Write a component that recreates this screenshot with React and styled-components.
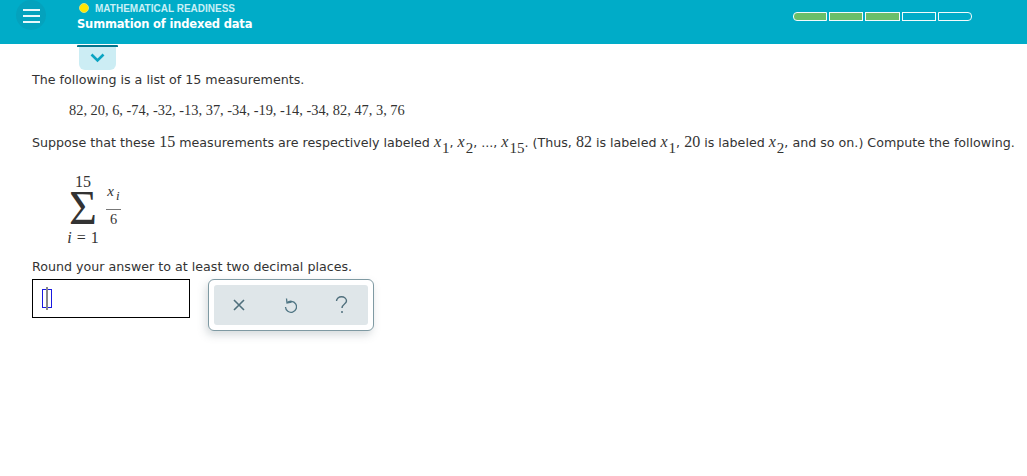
import React from 'react';
import styled, { createGlobalStyle } from 'styled-components';

const Global = createGlobalStyle`
  html, body { margin: 0; padding: 0; background: #fff; }
  #root { width: 1027px; height: 476px; overflow: hidden; }
`;
const Page = styled.div`
  width: 1027px; height: 476px; background: #fff; color: #333;
  font-family: "DejaVu Sans", Verdana, sans-serif; font-size: 12.67px;
`;
const Header = styled.header`
  height: 44px; background: #00acc8; display: flex; align-items: flex-start;
`;
const MenuButton = styled.div`
  width: 30px; height: 30px; margin: 0 0 0 16px; border-radius: 50%; box-sizing: border-box;
  background: #04a2bd; display: flex; flex-direction: column; gap: 4px;
  align-items: center; justify-content: center; padding-top: 2px;
`;
const MenuBar = styled.span`
  display: block; width: 17px; height: 2px; background: #e8f8fb;
`;
const Titles = styled.div`
  margin-left: 31px; display: flex; flex-direction: column; padding-top: 1px;
`;
const Topic = styled.div`
  display: flex; align-items: center; gap: 6px; height: 14px; margin-left: 2px;
  color: #c9f0f6; font-family: "Liberation Sans", sans-serif; font-size: 10px; font-weight: 700;
`;
const Dot = styled.span`
  width: 10px; height: 10px; border-radius: 50%; background: #ffe600; box-sizing: border-box; border: 0.5px solid #d8e27a;
`;
const Title = styled.div`
  margin-top: 2px; color: #fff; font-family: "DejaVu Sans", sans-serif; font-size: 11.5px; font-weight: 700; letter-spacing: -0.17px;
`;
const Progress = styled.div`
  display: flex; gap: 2px; margin: 12px 55px 0 auto;
`;
const Segment = styled.span`
  width: ${p => p.$w}px; height: 7px; border: 1px solid #f2fbfc;
  background: ${p => (p.$done ? '#6abf69' : 'transparent')};
  border-radius: ${p => p.$round || '0'};
`;
const Drawer = styled.div`
  position: relative; width: 37px; height: 25px; margin: 1px 0 0 79px; background: #ccedf4;
  border-radius: 0 0 6px 6px;
  display: flex; align-items: center; justify-content: center; padding-top: 1px; box-sizing: border-box;
  &::before { content: ''; position: absolute; top: 0; left: -2px; right: -2px; height: 2px; background: #04768c; border-radius: 1px 1px 0 0; }
`;
const Content = styled.main`
  padding: 2px 0 0 32px;
`;
const Para = styled.p`
  margin: 0; line-height: 16px; white-space: nowrap;
`;
const Data = styled.p`
  margin: 14px 0 0 37px; line-height: 16px;
  font-family: "Liberation Serif", serif; font-size: 14.4px; color: #333;
`;
const Suppose = styled(Para)`
  margin-top: 16px; height: 20px;
`;
const Num = styled.span`
  font-family: "Liberation Serif", serif; font-size: 16px;
`;
const V = styled.i`
  font-family: "Liberation Serif", serif; font-size: 16px; letter-spacing: 1px;
`;
const Sub = styled.sub`
  font-family: "Liberation Serif", serif; font-size: 15px; line-height: 0; vertical-align: -6px;
`;
const Formula = styled.div`
  margin: 20px 0 0 31px; width: 90px; height: 71px; display: flex; font-family: "Liberation Serif", serif; color: #333;
`;
const SumCol = styled.div`
  width: 40px; display: flex; flex-direction: column; align-items: center; font-size: 16px; line-height: 15px;
`;
const Sigma = styled.span`
  font-size: 48px; line-height: 38px; height: 41px;
`;
const Limit = styled.span`
  word-spacing: 1px;
`;
const Fraction = styled.div`
  margin: 9px 0 0 3px; display: flex; flex-direction: column; align-items: center; width: 15px;
  font-size: 14.4px; line-height: 15px;
`;
const Numer = styled.span`
  font-style: italic; border-bottom: 1px solid #777; width: 100%; text-align: center; padding-bottom: 9px; line-height: 16px; white-space: nowrap; font-size: 15px;
`;
const IdxI = styled.span`
  font-size: 13px; position: relative; top: 4px; margin-left: 2px;
`;
const Six = styled.span`
  padding-top: 2px;
`;
const Round = styled(Para)`
  margin-top: 14px;
`;
const AnswerRow = styled.div`
  display: flex; align-items: flex-start; margin-top: 4px;
`;
const Input = styled.div`
  width: 147px; height: 37px; border: 1px solid #000; display: flex; align-items: center; padding-left: 9px;
`;
const Caret = styled.div`
  width: 8px; height: 17px; border: 1px solid #1a1ae0; display: flex; justify-content: center;
  &::before { content: ''; flex: none; width: 2px; background: #888; height: 23px; margin-top: -3px; }
`;
const Tools = styled.div`
  margin-left: 18px; width: 154px; height: 40px; padding: 5px; border: 1px solid #7f9aa3; border-radius: 6px;
  background: #fff; box-shadow: -2px 4px 8px rgba(90,110,120,.25);
`;
const ToolInner = styled.div`
  height: 40px; background: #dfe6e9; border-radius: 3px; display: grid; grid-template-columns: 50px 51px 53px; align-items: center; justify-items: center;
`;

const Chevron = () => (
  <svg width="15" height="10" viewBox="0 0 15 10"><path d="M1.5 1.5 7.5 7.5l6-6" fill="none" stroke="#0aa4c2" strokeWidth="2.6" /></svg>
);
const XIcon = () => (
  <svg width="14" height="14" viewBox="0 0 14 14"><path d="M2 2l10 10M12 2 2 12" fill="none" stroke="#4f6f7c" strokeWidth="1.6" /></svg>
);
const Undo = () => (
  <svg width="14" height="16" viewBox="0 0 14 16"><path d="M4 6A5.5 5.5 0 1 1 2.5 10M3.5 1.5 4 6 8.5 5" fill="none" stroke="#4f7583" strokeWidth="1.3" /></svg>
);
const Help = () => (
  <svg width="13" height="18" viewBox="0 0 13 18"><path d="M1.5 5a5 4.3 0 0 1 10 0c0 3-4.5 3-4.5 7" fill="none" stroke="#4f6f7c" strokeWidth="1.4" /><circle cx="7" cy="16" r="1" fill="#4f6f7c" /></svg>
);

export default function App() {
  return (
    <Page>
      <Global />
      <Header>
        <MenuButton><MenuBar /><MenuBar /><MenuBar /></MenuButton>
        <Titles>
          <Topic><Dot />MATHEMATICAL READINESS</Topic>
          <Title>Summation of indexed data</Title>
        </Titles>
        <Progress>
          <Segment $w={32} $done $round="4px 0 0 4px" />
          <Segment $w={32} $done />
          <Segment $w={33} $done />
          <Segment $w={32} />
          <Segment $w={32} $round="0 4px 4px 0" />
        </Progress>
      </Header>
      <Drawer><Chevron /></Drawer>
      <Content>
        <Para>The following is a list of 15 measurements.</Para>
        <Data>82, 20, 6, -74, -32, -13, 37, -34, -19, -14, -34, 82, 47, 3, 76</Data>
        <Suppose>
          Suppose that these <Num>15</Num> measurements are respectively labeled <V>x</V><Sub>1</Sub>, <V>x</V><Sub>2</Sub>, ..., <V>x</V><Sub>15</Sub>. (Thus, <Num>82</Num> is labeled <V>x</V><Sub>1</Sub>, <Num>20</Num> is labeled <V>x</V><Sub>2</Sub>, and so on.) Compute the following.
        </Suppose>
        <Formula>
          <SumCol>
            <span>15</span>
            <Sigma>Σ</Sigma>
            <Limit><i>i</i> = 1</Limit>
          </SumCol>
          <Fraction>
            <Numer>x<IdxI>i</IdxI></Numer>
            <Six>6</Six>
          </Fraction>
        </Formula>
        <Round>Round your answer to at least two decimal places.</Round>
        <AnswerRow>
          <Input><Caret /></Input>
          <Tools>
            <ToolInner><XIcon /><Undo /><Help /></ToolInner>
          </Tools>
        </AnswerRow>
      </Content>
    </Page>
  );
}
